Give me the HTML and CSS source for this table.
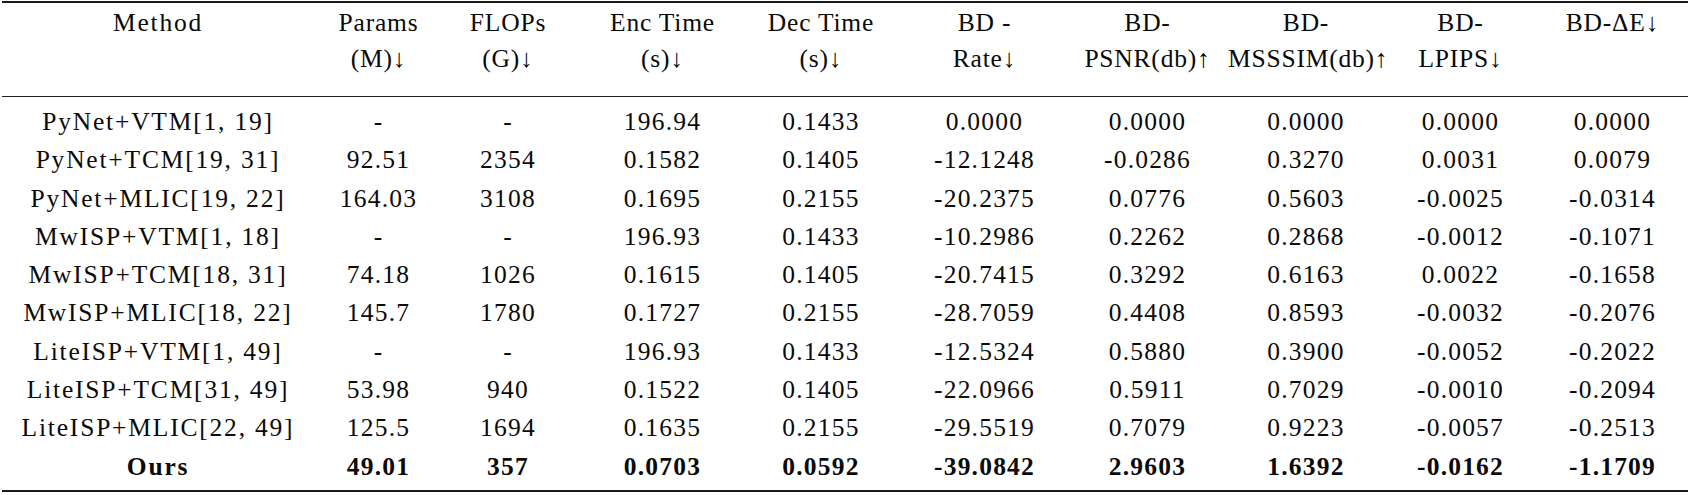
FILE: index.html
```html
<!DOCTYPE html>
<html>
<head>
<meta charset="utf-8">
<link rel="stylesheet" href="styles.css">
</head>
<body>
<table class="results">
  <colgroup>
    <col class="c1"><col class="c2"><col class="c3"><col class="c4"><col class="c5">
    <col class="c6"><col class="c7"><col class="c8"><col class="c9"><col class="c10">
  </colgroup>
  <thead>
    <tr>
      <th class="k1">Method</th>
      <th>Params<br>(M)↓</th>
      <th class="k3">FLOPs<br>(G)↓</th>
      <th>Enc Time<br>(s)↓</th>
      <th>Dec Time<br>(s)↓</th>
      <th>BD -<br>Rate↓</th>
      <th>BD-<br>PSNR(db)↑</th>
      <th>BD-<br>MSSSIM(db)↑</th>
      <th>BD-<br>LPIPS↓</th>
      <th>BD-ΔE↓</th>
    </tr>
  </thead>
  <tbody>
    <tr><td class="k1">PyNet+VTM[1, 19]</td><td>-</td><td class="k3">-</td><td>196.94</td><td>0.1433</td><td>0.0000</td><td>0.0000</td><td>0.0000</td><td>0.0000</td><td>0.0000</td></tr>
    <tr><td class="k1">PyNet+TCM[19, 31]</td><td>92.51</td><td class="k3">2354</td><td>0.1582</td><td>0.1405</td><td>-12.1248</td><td>-0.0286</td><td>0.3270</td><td>0.0031</td><td>0.0079</td></tr>
    <tr><td class="k1">PyNet+MLIC[19, 22]</td><td>164.03</td><td class="k3">3108</td><td>0.1695</td><td>0.2155</td><td>-20.2375</td><td>0.0776</td><td>0.5603</td><td>-0.0025</td><td>-0.0314</td></tr>
    <tr><td class="k1">MwISP+VTM[1, 18]</td><td>-</td><td class="k3">-</td><td>196.93</td><td>0.1433</td><td>-10.2986</td><td>0.2262</td><td>0.2868</td><td>-0.0012</td><td>-0.1071</td></tr>
    <tr><td class="k1">MwISP+TCM[18, 31]</td><td>74.18</td><td class="k3">1026</td><td>0.1615</td><td>0.1405</td><td>-20.7415</td><td>0.3292</td><td>0.6163</td><td>0.0022</td><td>-0.1658</td></tr>
    <tr><td class="k1">MwISP+MLIC[18, 22]</td><td>145.7</td><td class="k3">1780</td><td>0.1727</td><td>0.2155</td><td>-28.7059</td><td>0.4408</td><td>0.8593</td><td>-0.0032</td><td>-0.2076</td></tr>
    <tr><td class="k1">LiteISP+VTM[1, 49]</td><td>-</td><td class="k3">-</td><td>196.93</td><td>0.1433</td><td>-12.5324</td><td>0.5880</td><td>0.3900</td><td>-0.0052</td><td>-0.2022</td></tr>
    <tr><td class="k1">LiteISP+TCM[31, 49]</td><td>53.98</td><td class="k3">940</td><td>0.1522</td><td>0.1405</td><td>-22.0966</td><td>0.5911</td><td>0.7029</td><td>-0.0010</td><td>-0.2094</td></tr>
    <tr><td class="k1">LiteISP+MLIC[22, 49]</td><td>125.5</td><td class="k3">1694</td><td>0.1635</td><td>0.2155</td><td>-29.5519</td><td>0.7079</td><td>0.9223</td><td>-0.0057</td><td>-0.2513</td></tr>
    <tr class="ours"><td class="k1">Ours</td><td>49.01</td><td class="k3">357</td><td>0.0703</td><td>0.0592</td><td>-39.0842</td><td>2.9603</td><td>1.6392</td><td>-0.0162</td><td>-1.1709</td></tr>
  </tbody>
</table>
</body>
</html>
```

FILE: styles.css
```css
html, body {
  margin: 0;
  padding: 0;
  background: #ffffff;
}

body {
  padding: 1px 2px 0 2px;
}

.results {
  width: 1686px;
  table-layout: fixed;
  border-collapse: collapse;
  font-family: "Liberation Serif", "DejaVu Serif", serif;
  font-size: 25.5px;
  letter-spacing: 1.2px;
  color: #0a0a0a;
  border-top: 2.5px solid #1a1a1a;
  border-bottom: 2.5px solid #1a1a1a;
}

.c1 { width: 312px; }
.c2 { width: 129px; }
.c3 { width: 142px; }
.c4 { width: 155px; }
.c5 { width: 162px; }
.c6 { width: 165px; }
.c7 { width: 161px; }
.c8 { width: 156px; }
.c9 { width: 153px; }
.c10 { width: 151px; }

.results th {
  font-weight: normal;
  text-align: center;
  vertical-align: top;
  line-height: 35.5px;
  letter-spacing: 0.8px;
  padding: 2px 0 20px 0;
  border-bottom: 1.2px solid #222222;
  white-space: nowrap;
}

.results td {
  text-align: center;
  line-height: 38.3px;
  padding: 0;
  white-space: nowrap;
}

.results tbody tr:first-child td {
  padding-top: 6px;
}

.results tbody tr:last-child td {
  padding-bottom: 4px;
}

.results .k1 {
  letter-spacing: 1.8px;
}

.results .k3 {
  padding-right: 12px;
}

.results .ours td {
  font-weight: bold;
}
```
